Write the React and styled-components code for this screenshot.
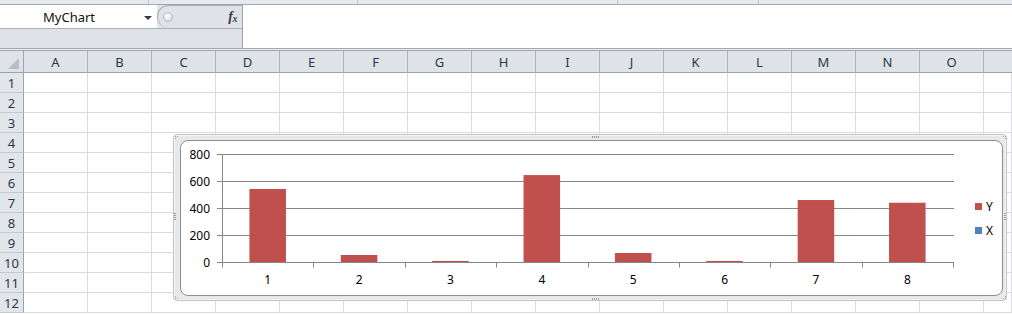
import React from "react";
import styled, { createGlobalStyle } from "styled-components";

const GlobalStyle = createGlobalStyle`
  html, body {
    margin: 0;
    padding: 0;
    background: #fff;
    overflow: hidden;
  }
  body {
    font-family: "Noto Sans", "Liberation Sans", sans-serif;
  }
`;

const COLUMNS = "ABCDEFGHIJKLMNO".split("");
const ROW_COUNT = 12;
const SERIES = [541, 52, 8, 644, 67, 8, 459, 439];
const AXIS_MAX = 800;
const AXIS_STEP = 200;

// plot geometry (px) inside the chart svg
const PLOT_LEFT = 12;
const PLOT_WIDTH = 731;
const PLOT_HEIGHT = 108;
const PLOT_BOTTOM = 112;

const Window = styled.div`
  width: 1012px;
  height: 314px;
  display: flex;
  flex-direction: column;
  overflow: hidden;
`;

const RibbonEdge = styled.div`
  flex: none;
  height: 4px;
  display: flex;
  background: #e6e9ed;
  border-bottom: 1px solid #a3a8ae;
`;

const RibbonGroup = styled.div`
  box-sizing: border-box;
  width: ${(p) => (p.$width ? `${p.$width}px` : "auto")};
  flex: ${(p) => (p.$width ? "none" : "1")};
  border-right: ${(p) => (p.$width ? "1px solid #c2c6cb" : "none")};
`;

const FormulaBar = styled.div`
  flex: none;
  height: 43px;
  display: flex;
  background: #fff;
  border-bottom: 1px solid #a3a8ae;
`;

const NamePanel = styled.div`
  width: 242px;
  display: flex;
  flex-direction: column;
  background: #dfe3e8;
  border-right: 1px solid #9ea3a9;
`;

const NameRow = styled.div`
  flex: none;
  height: 23px;
  display: flex;
  border-bottom: 1px solid #aab0b6;
`;

const NameBox = styled.div`
  width: 157px;
  box-sizing: border-box;
  display: flex;
  align-items: center;
  padding-left: 43px;
  background: #fff;
  font-size: 13px;
  color: #111;
`;

const Caret = styled.span`
  margin-left: auto;
  margin-right: 5px;
  margin-top: 2px;
  width: 0;
  height: 0;
  border-left: 4px solid transparent;
  border-right: 4px solid transparent;
  border-top: 4px solid #3a3a3a;
`;

const FxPill = styled.div`
  flex: 1;
  display: flex;
  align-items: center;
  padding: 0 5px;
  background: #dfe3e8;
  border: 1px solid #a9aeb4;
  border-right: none;
  border-bottom: none;
  border-radius: 12px 0 0 12px;
`;

const Knob = styled.span`
  width: 8px;
  height: 8px;
  border-radius: 50%;
  border: 1px solid #b7bcc2;
  background: radial-gradient(circle at 40% 35%, #ffffff 0, #e9ebee 45%, #c9cdd2 100%);
`;

const FxLabel = styled.span`
  margin-left: auto;
  font-family: "Liberation Serif", "DejaVu Serif", serif;
  font-style: italic;
  font-weight: bold;
  font-size: 14px;
  color: #3c3c3c;
  letter-spacing: -0.5px;
  sub {
    font-size: 10px;
    vertical-align: -1px;
  }
`;

const NameFill = styled.div`
  flex: 1;
`;

const FormulaInput = styled.div`
  flex: 1;
  background: #fff;
`;

const Splitter = styled.div`
  flex: none;
  border-top: 1px solid #eceef1;
  border-bottom: 1px solid #a3a8ae;
`;

const Sheet = styled.div`
  position: relative;
  flex: 1;
  min-height: 0;
  display: grid;
  grid-template-columns: 24px repeat(15, 64px) 1fr;
  grid-template-rows: 22px;
  grid-auto-rows: 20px;
  font-size: 13px;
  color: #27384a;
`;

const Corner = styled.div`
  box-sizing: border-box;
  display: flex;
  align-items: flex-end;
  justify-content: flex-end;
  padding: 0 4px 3px 0;
  background: #dfe3e8;
  border-right: 1px solid #9ea3a9;
  border-bottom: 1px solid #9ea3a9;
`;

const CornerMark = styled.span`
  width: 0;
  height: 0;
  border-left: 11px solid transparent;
  border-bottom: 11px solid #b9bec4;
`;

const ColHeader = styled.div`
  box-sizing: border-box;
  display: flex;
  align-items: center;
  justify-content: center;
  background: #dfe3e8;
  border-right: ${(p) => (p.$last ? "none" : "1px solid #adb2b8")};
  border-bottom: 1px solid #9ea3a9;
`;

const RowHeader = styled.div`
  box-sizing: border-box;
  display: flex;
  align-items: center;
  justify-content: center;
  background: #e2e5e9;
  border-right: 1px solid #9ea3a9;
  border-bottom: 1px solid #c4c9ce;
`;

const Cell = styled.div`
  box-sizing: border-box;
  border-right: 1px solid #dadcdd;
  border-bottom: 1px solid #dadcdd;
`;

const ChartFrame = styled.div`
  position: absolute;
  left: 173px;
  top: 83px;
  width: 834px;
  height: 167px;
  box-sizing: border-box;
  padding: 5px 3px 4px 6px;
  background: #e8e8e8;
  border: 1px solid #c4c4c4;
  border-radius: 4px;
  box-shadow: inset 0 0 0 1px #f4f4f4;
`;

const Grip = styled.span`
  position: absolute;
  width: ${(p) => (p.$vertical ? "2px" : "8px")};
  height: ${(p) => (p.$vertical ? "8px" : "2px")};
  background: repeating-linear-gradient(
    ${(p) => (p.$vertical ? "180deg" : "90deg")},
    #9a9a9a 0 1px,
    transparent 1px 2px
  );
`;

const CornerGrip = styled.span`
  position: absolute;
  width: 4px;
  height: 4px;
  background:
    repeating-linear-gradient(90deg, #a0a0a0 0 1px, transparent 1px 2px) top / 4px 1px no-repeat,
    repeating-linear-gradient(180deg, #a0a0a0 0 1px, transparent 1px 2px) left / 1px 4px no-repeat;
`;

const ChartArea = styled.div`
  height: 100%;
  box-sizing: border-box;
  display: flex;
  align-items: flex-start;
  background: #fff;
  border: 1px solid #8f8f8f;
  border-radius: 8px;
  font-family: "Noto Sans", "Liberation Sans", sans-serif;
  font-size: 12px;
  color: #000;
`;

const YAxis = styled.div`
  width: 29px;
  display: flex;
  flex-direction: column;
`;

const YLabel = styled.span`
  height: 27px;
  line-height: 27px;
  text-align: right;
`;

const Plot = styled.div`
  margin-top: 9px;
  display: flex;
  flex-direction: column;
`;

const XLabels = styled.div`
  margin-left: ${PLOT_LEFT}px;
  width: ${PLOT_WIDTH}px;
  display: grid;
  grid-template-columns: repeat(${SERIES.length}, 1fr);
  line-height: 20px;
  text-align: center;
`;

const Legend = styled.div`
  margin: 53px 0 0 21px;
  display: flex;
  flex-direction: column;
`;

const LegendItem = styled.div`
  height: 24px;
  display: flex;
  align-items: center;
  gap: 4px;
`;

const Swatch = styled.span`
  width: 7px;
  height: 7px;
  background: ${(p) => p.$color};
`;

const BarChart = () => {
  const cw = PLOT_WIDTH / SERIES.length;
  const bw = cw / 2.5;
  const scale = PLOT_HEIGHT / AXIS_MAX;
  const ticks = [];
  for (let v = 0; v <= AXIS_MAX; v += AXIS_STEP) ticks.push(v);
  const rowFor = (v) => PLOT_BOTTOM - Math.round(v * scale) + 0.5;
  const axis = "#868686";

  return (
    <svg width={744} height={120} style={{ display: "block" }}>
      {ticks.map((v) => (
        <g key={v}>
          <line x1={PLOT_LEFT} x2={744} y1={rowFor(v)} y2={rowFor(v)} stroke={axis} />
          <line x1={7} x2={PLOT_LEFT} y1={rowFor(v)} y2={rowFor(v)} stroke={axis} />
        </g>
      ))}
      {SERIES.map((v, i) => {
        const h = v * scale;
        return (
          <rect
            key={i}
            x={PLOT_LEFT + i * cw + (cw - bw) / 2}
            y={PLOT_BOTTOM - h}
            width={bw}
            height={h}
            fill="#c0504d"
          />
        );
      })}
      <line x1={PLOT_LEFT + 0.5} x2={PLOT_LEFT + 0.5} y1={4} y2={PLOT_BOTTOM + 1} stroke={axis} />
      <line x1={PLOT_LEFT} x2={744} y1={PLOT_BOTTOM + 0.5} y2={PLOT_BOTTOM + 0.5} stroke={axis} />
      {SERIES.map((_, i) => i)
        .concat(SERIES.length)
        .map((i) => {
          const x = Math.min(Math.round(PLOT_LEFT + i * cw), 743) + 0.5;
          return (
            <line key={i} x1={x} x2={x} y1={PLOT_BOTTOM} y2={PLOT_BOTTOM + 5.5} stroke={axis} />
          );
        })}
    </svg>
  );
};

const Chart = () => {
  const ticks = [];
  for (let v = AXIS_MAX; v >= 0; v -= AXIS_STEP) ticks.push(v);
  return (
    <ChartFrame>
      <Grip style={{ left: 418, top: 1 }} />
      <Grip style={{ left: 418, top: 163 }} />
      <Grip $vertical style={{ left: 0, top: 78 }} />
      <Grip $vertical style={{ left: 830, top: 78 }} />
      <CornerGrip style={{ left: 1, top: 1 }} />
      <CornerGrip style={{ left: 828, top: 1, transform: "scaleX(-1)" }} />
      <CornerGrip style={{ left: 1, top: 160, transform: "scaleY(-1)" }} />
      <CornerGrip style={{ left: 828, top: 160, transform: "scale(-1)" }} />
      <ChartArea>
        <YAxis>
          {ticks.map((v) => (
            <YLabel key={v}>{v}</YLabel>
          ))}
        </YAxis>
        <Plot>
          <BarChart />
          <XLabels>
            {SERIES.map((_, i) => (
              <span key={i}>{i + 1}</span>
            ))}
          </XLabels>
        </Plot>
        <Legend>
          <LegendItem>
            <Swatch $color="#c0504d" />
            Y
          </LegendItem>
          <LegendItem>
            <Swatch $color="#4f81bd" />
            X
          </LegendItem>
        </Legend>
      </ChartArea>
    </ChartFrame>
  );
};

export default function App() {
  const rows = Array.from({ length: ROW_COUNT }, (_, i) => i + 1);
  return (
    <Window>
      <GlobalStyle />
      <RibbonEdge>
        <RibbonGroup $width={149} />
        <RibbonGroup $width={209} />
        <RibbonGroup $width={260} />
        <RibbonGroup $width={141} />
        <RibbonGroup />
      </RibbonEdge>
      <FormulaBar>
        <NamePanel>
          <NameRow>
            <NameBox>
              MyChart
              <Caret />
            </NameBox>
            <FxPill>
              <Knob />
              <FxLabel>
                f<sub>x</sub>
              </FxLabel>
            </FxPill>
          </NameRow>
          <NameFill />
        </NamePanel>
        <FormulaInput />
      </FormulaBar>
      <Splitter />
      <Sheet>
        <Corner>
          <CornerMark />
        </Corner>
        {COLUMNS.map((c) => (
          <ColHeader key={c}>{c}</ColHeader>
        ))}
        <ColHeader $last />
        {rows.map((r) => (
          <React.Fragment key={r}>
            <RowHeader>{r}</RowHeader>
            {COLUMNS.map((c) => (
              <Cell key={c} />
            ))}
            <Cell />
          </React.Fragment>
        ))}
        <Chart />
      </Sheet>
    </Window>
  );
}
